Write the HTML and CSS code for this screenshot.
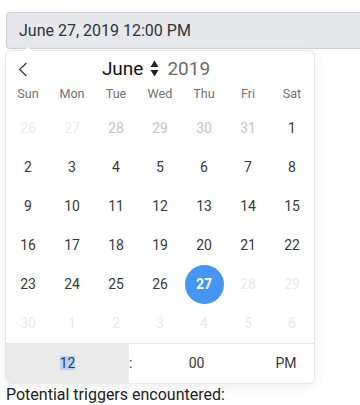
FILE: index.html
```html
<!DOCTYPE html>
<html>
<head>
<meta charset="utf-8">
<link rel="stylesheet" href="styles.css">
</head>
<body>
<div class="page">
  <div class="field">June 27, 2019 12:00 PM</div>
  <div class="cal">
    <div class="cal-head">
      <span class="prev">
        <svg width="10" height="15" viewBox="0 0 10 15"><polyline points="8.5,1 1.5,7.5 8.5,14" fill="none" stroke="#333" stroke-width="1.2"/></svg>
      </span>
      <div class="cur">
        <span class="month">June</span>
        <svg class="spin" width="9" height="17" viewBox="0 0 9 17"><polygon points="4.5,0.5 8.5,7 0.5,7" fill="#222"/><polygon points="0.5,10 8.5,10 4.5,16.5" fill="#222"/></svg>
        <span class="year">2019</span>
      </div>
      <span></span>
    </div>
    <div class="weekdays">
      <span>Sun</span><span>Mon</span><span>Tue</span><span>Wed</span><span>Thu</span><span>Fri</span><span>Sat</span>
    </div>
    <div class="days">
      <span class="off">26</span><span class="off">27</span><span class="prevm">28</span><span class="prevm">29</span><span class="prevm">30</span><span class="prevm">31</span><span>1</span>
      <span>2</span><span>3</span><span>4</span><span>5</span><span>6</span><span>7</span><span>8</span>
      <span>9</span><span>10</span><span>11</span><span>12</span><span>13</span><span>14</span><span>15</span>
      <span>16</span><span>17</span><span>18</span><span>19</span><span>20</span><span>21</span><span>22</span>
      <span>23</span><span>24</span><span>25</span><span>26</span><span class="selected">27</span><span class="off">28</span><span class="off">29</span>
      <span class="off">30</span><span class="off">1</span><span class="off">2</span><span class="off">3</span><span class="off">4</span><span class="off">5</span><span class="off">6</span>
    </div>
    <div class="time">
      <div class="t-hour"><span class="sel">12</span></div>
      <div class="t-sep">:</div>
      <div class="t-min">00</div>
      <div class="t-ampm">PM</div>
    </div>
  </div>
  <p class="note">Potential triggers encountered:</p>
</div>
</body>
</html>
```

FILE: styles.css
```css
html, body {
  margin: 0;
  padding: 0;
  background: #fff;
  overflow: hidden;
}
body {
  font-family: Roboto, "Liberation Sans", sans-serif;
  color: #393939;
}
.page {
  padding: 12px 0 0 6px;
}
.field {
  box-sizing: border-box;
  height: 37px;
  background: #e6e8eb;
  border: 1px solid #cdd1d5;
  border-right: none;
  border-radius: 4px 0 0 4px;
  padding-left: 12px;
  font-size: 16px;
  line-height: 35px;
  color: #2f3338;
}
.cal {
  position: relative;
  width: 308px;
  margin-top: 2px;
  background: #fff;
  border-radius: 5px;
  box-shadow: 1px 0 0 #e6e6e6, -1px 0 0 #e6e6e6, 0 1px 0 #e6e6e6, 0 -1px 0 #e6e6e6, 0 3px 13px rgba(0,0,0,0.08);
}
.cal::before,
.cal::after {
  content: "";
  position: absolute;
  left: 17px;
  border: solid transparent;
  border-width: 0 5px;
}
.cal::before {
  top: -5px;
  border-bottom: 5px solid #e6e6e6;
}
.cal::after {
  top: -4px;
  left: 18px;
  border-width: 0 4px;
  border-bottom: 4px solid #fff;
}
.cal-head {
  display: grid;
  grid-template-columns: 34px 1fr 34px;
  height: 34px;
  align-items: center;
}
.prev {
  display: flex;
  justify-content: flex-start;
  padding-left: 12px;
  padding-top: 3px;
}
.prev svg { display: block; }
.cur {
  display: flex;
  justify-content: center;
  align-items: center;
  font-size: 19px;
  padding-right: 8px;
  padding-top: 1px;
}
.month {
  color: #111;
}
.spin {
  display: block;
  margin: 0 8px 0 7px;
}
.year {
  color: #6b6b6b;
}
.weekdays {
  display: grid;
  grid-template-columns: repeat(7, 44px);
  height: 24px;
  font-size: 12.6px;
  line-height: 18px;
  color: #717171;
  text-align: center;
}
.days {
  display: grid;
  grid-template-columns: repeat(7, 44px);
  grid-auto-rows: 39px;
  font-size: 14px;
  justify-items: center;
}
.days span {
  width: 39px;
  height: 39px;
  line-height: 39px;
  text-align: center;
  border-radius: 50%;
  color: #393939;
}
.days span.prevm { color: #c3c3c3; }
.days span.off { color: #ebebeb; }
.days span.selected {
  background: #4596f3;
  color: #fff;
  font-weight: 700;
}
.time {
  display: flex;
  height: 39px;
  border-top: 1px solid #e6e6e6;
  font-size: 14px;
  line-height: 39px;
  text-align: center;
  color: #393939;
}
.t-hour {
  width: 123px;
  background: #eaeaea;
  border-bottom-left-radius: 5px;
}
.sel {
  display: inline-block;
  background: #b3d4fc;
  line-height: 14px;
}
.t-sep {
  width: 6px;
  text-align: left;
}
.t-min {
  width: 123px;
}
.t-ampm {
  width: 56px;
}
.note {
  margin: 2px 0 0 0;
  font-size: 16px;
  color: #222;
  line-height: 19px;
}
```
